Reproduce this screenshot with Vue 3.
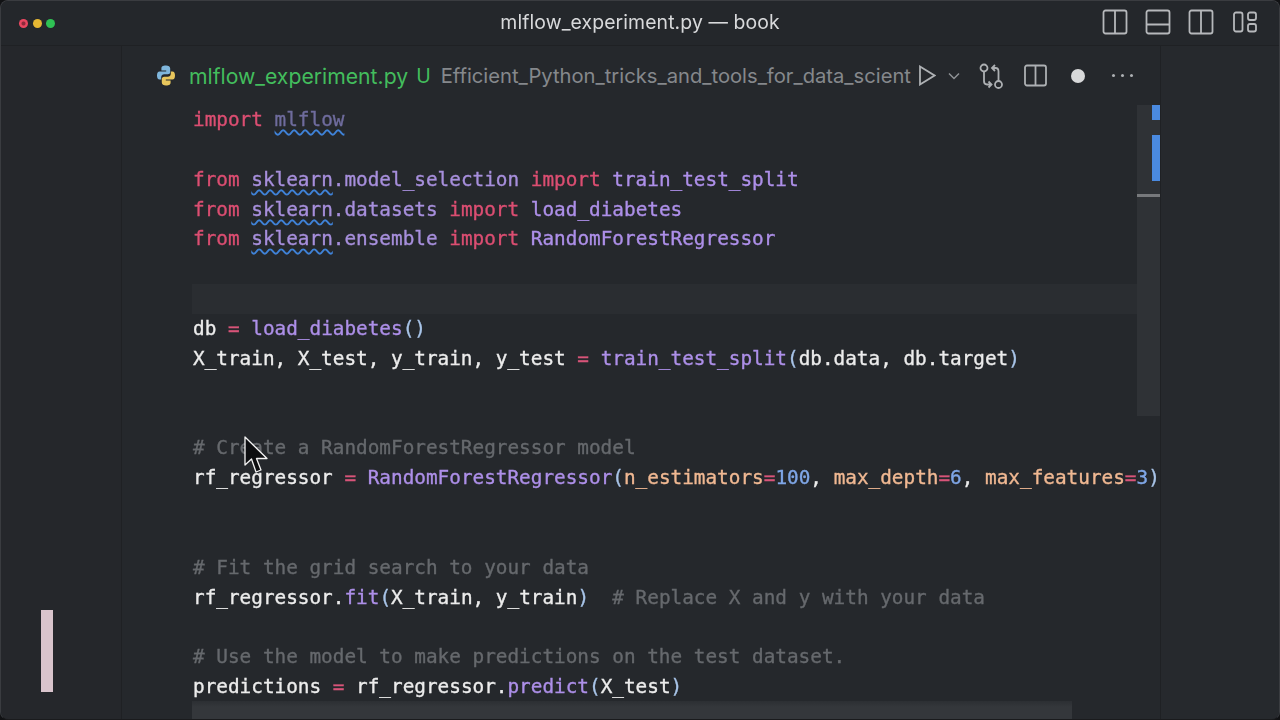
<script setup>
const k = 'kw', m = 'mod', d = 'mod-dim', w = 'wave', f = 'fn', t = 'txt', c = 'com', o = 'op', p = 'par', n = 'num', b = 'br'
const lines = [
  [['import', k], [' ', t], ['mlflow', d + ' ' + w]],
  [],
  [['from', k], [' ', t], ['sklearn', m + ' ' + w], ['.model_selection', m], [' ', t], ['import', k], [' ', t], ['train_test_split', f]],
  [['from', k], [' ', t], ['sklearn', m + ' ' + w], ['.datasets', m], [' ', t], ['import', k], [' ', t], ['load_diabetes', f]],
  [['from', k], [' ', t], ['sklearn', m + ' ' + w], ['.ensemble', m], [' ', t], ['import', k], [' ', t], ['RandomForestRegressor', f]],
  [],
  [],
  [['db ', t], ['=', o], [' ', t], ['load_diabetes', f], ['()', b]],
  [['X_train, X_test, y_train, y_test ', t], ['=', o], [' ', t], ['train_test_split', f], ['(', b], ['db.data, db.target', t], [')', b]],
  [],
  [],
  [['# Create a RandomForestRegressor model', c]],
  [['rf_regressor ', t], ['=', o], [' ', t], ['RandomForestRegressor', f], ['(', b], ['n_estimators', p], ['=', o], ['100', n], [', ', t], ['max_depth', p], ['=', o], ['6', n], [', ', t], ['max_features', p], ['=', o], ['3', n], [')', b]],
  [],
  [],
  [['# Fit the grid search to your data', c]],
  [['rf_regressor', t], ['.', t], ['fit', f], ['(', b], ['X_train, y_train', t], [')', b], ['  ', t], ['# Replace X and y with your data', c]],
  [],
  [['# Use the model to make predictions on the test dataset.', c]],
  [['predictions ', t], ['=', o], [' rf_regressor.', t], ['predict', f], ['(', b], ['X_test', t], [')', b]],
  [],
]
</script>

<template>
  <div class="window">
    <header class="titlebar">
      <div class="lights">
        <span class="light red"></span>
        <span class="light yellow"></span>
        <span class="light green"></span>
      </div>
      <div class="title">mlflow_experiment.py — book</div>
      <div class="layout-icons">
        <svg width="26" height="26" viewBox="0 0 26 26"><rect x="1.5" y="1.5" width="23" height="23" rx="2"/><path d="M13 1.500v23"/></svg>
        <svg width="26" height="26" viewBox="0 0 26 26"><rect x="1.5" y="1.5" width="23" height="23" rx="2"/><path d="M1.5 15.500h23"/></svg>
        <svg width="26" height="26" viewBox="0 0 26 26"><rect x="1.500" y="1.5" width="23" height="23" rx="2"/><path d="M13 1.500v23"/></svg>
        <svg class="last" width="26" height="26" viewBox="0 0 26 26"><rect x="2" y="3.500" width="8.500" height="19" rx="2"/><rect x="16" y="3.500" width="8" height="7.500" rx="2"/><rect x="16" y="15" width="8" height="7.500" rx="2"/></svg>
      </div>
    </header>

    <div class="body">
      <aside class="sidebar"><div class="sidebar-bar"></div></aside>

      <main class="main">
        <div class="tabbar">
          <svg class="py" width="18" height="21" viewBox="0 0 18 21">
            <path fill="#7fb6dc" d="M9 0.500c-3.500 0-4.600 1.200-4.600 3v2h4.800v1H2.600C0.900 6.500 0 8 0 10.500s0.900 4 2.600 4h1.600v-2.300c0-1.700 1.300-3 3-3h3.700c1.300 0 2.300-1 2.300-2.300V3.500c0-2-1.700-3-4.200-3z"/>
            <path fill="#e8c65c" d="M9 20.500c3.500 0 4.600-1.200 4.600-3v-2H8.800v-1h6.600c1.700 0 2.600-1.500 2.600-4s-.9-4-2.600-4h-1.600v2.300c0 1.700-1.300 3-3 3H7.100c-1.300 0-2.300 1-2.300 2.300v3.400c0 2 1.700 3 4.200 3z"/>
          </svg>
          <span class="tab-name">mlflow_experiment.py</span>
          <span class="tab-u">U</span>
          <span class="tab-path">Efficient_Python_tricks_and_tools_for_data_scient</span>
          <div class="tab-actions">
            <svg class="a-play" width="18" height="21" viewBox="0 0 18 21"><path d="M2 1.500 16.500 10.500 2 19.500z"/></svg>
            <svg class="a-chev" width="14" height="8" viewBox="0 0 14 8"><path d="M2 1.500l5 5 5-5"/></svg>
            <svg class="a-diff" width="24" height="26" viewBox="0 0 24 26">
              <circle cx="5" cy="5" r="3.500"/><circle cx="19.500" cy="21.500" r="3.500"/>
              <path d="M5 8.500v9.500c0 2 1.200 3.500 3 3.500h4M9.500 18.500l3 3-3 3M19.500 18V8.500c0-2-1.200-3.500-3-3.500h-4M16 2l-3 3 3 3"/>
            </svg>
            <svg class="a-split" width="23" height="23" viewBox="0 0 23 23"><rect x="1" y="1.500" width="21" height="20" rx="2"/><path d="M11.500 1.500v20"/></svg>
            <span class="a-dot"></span>
            <span class="a-more"><i></i><i></i><i></i></span>
          </div>
        </div>

        <div class="editor">
          <div class="current-line"></div>
          <div class="bottom-line"></div>
          <div class="code">
            <div v-for="(line, i) in lines" :key="i" class="line"><span v-for="(tok, j) in line" :key="j" :class="tok[1]">{{ tok[0] }}</span></div>
          </div>
          <div class="scroll-track"></div>
          <div class="scroll-mark one"></div>
          <div class="scroll-mark two"></div>
          <div class="scroll-rule"></div>
        </div>
      </main>

      <aside class="rightbar"></aside>
    </div>

    <svg class="cursor" width="26" height="40" viewBox="0 0 26 40">
      <path d="M2 2V30l6.500-6 4.500 13 5-2-4.500-11.500H24z" fill="#0d0e10" stroke="#f4f4f4" stroke-width="1.300" stroke-linejoin="round"/>
    </svg>
  </div>
</template>

<style>
html, body { margin: 0; background: #111214; overflow: hidden; }
</style>

<style scoped>
.window {
  position: relative;
  width: 1280px;
  height: 720px;
  box-sizing: border-box;
  overflow: hidden;
  display: flex;
  flex-direction: column;
  background: #25282c;
  border: 1px solid #3a3c40;
  border-bottom-color: #1a1b1d;
  border-radius: 8px;
  filter: blur(0.45px);
  font-family: Inter, "Liberation Sans", sans-serif;
}
.titlebar {
  position: relative;
  flex: 0 0 45px;
  box-sizing: border-box;
  padding-bottom: 3px;
  display: flex;
  align-items: center;
  justify-content: space-between;
  background: #24272b;
  border-bottom: 1px solid #1f2124;
}
.lights { display: flex; gap: 4.500px; padding-left: 18px; margin-top: 4px; }
.light { width: 9px; height: 9px; border-radius: 50%; }
.red { background: radial-gradient(circle, #8e2a3c 0 1.500px, #ea4760 2.500px); }
.yellow { background: #e5b733; }
.green { background: #2fc254; }
.title {
  position: absolute;
  left: 0;
  right: 0;
  text-align: center;
  color: #d8d9db;
  font-size: 19.400px;
  letter-spacing: 0.1px;
}
.layout-icons { display: flex; gap: 17px; padding-right: 21px; }
.layout-icons svg { fill: none; stroke: #b6b8bb; stroke-width: 1.800; }
.layout-icons .last { margin-left: 1px; }

.body { flex: 1; display: flex; min-height: 0; }
.sidebar {
  flex: 0 0 121px;
  display: flex;
  flex-direction: column;
  justify-content: flex-end;
  padding: 0 0 27px 40px;
  box-sizing: border-box;
  border-right: 1px solid #1f2124;
  background: #25272b;
}
.sidebar-bar { width: 12px; height: 82px; background: #d9c4cc; }
.main { flex: 0 0 1037.500px; min-width: 0; display: flex; flex-direction: column; }
.rightbar { flex: 1; border-left: 1px solid #1f2124; background: #26292d; }

.tabbar {
  flex: 0 0 59px;
  display: flex;
  align-items: center;
  box-sizing: border-box;
  padding: 0 0 0 35px;
  background: #25282c;
}
.py { flex: none; margin-right: 14px; }
.tab-name { color: #43bd5d; font-size: 21.200px; white-space: nowrap; }
.tab-u { color: #43bd5d; font-size: 19.500px; margin-left: 8px; }
.tab-path {
  flex: none;
  color: #85888c;
  font-size: 20.200px;
  margin-left: 10px;
  width: 470px;
  white-space: nowrap;
  overflow: hidden;
}
.tab-actions { display: flex; align-items: center; margin-left: 7px; }
.tab-actions svg { flex: none; fill: none; stroke: #adb0b3; stroke-width: 1.800; }
.tab-actions .a-chev { margin-left: 11px; stroke: #8f9296; stroke-width: 1.500; }
.a-diff { margin-left: 18px; }
.a-split { margin-left: 21px; }
.a-dot { width: 14px; height: 14px; border-radius: 50%; background: #d8d9da; margin-left: 24px; }
.a-more { display: flex; gap: 6px; margin-left: 27px; }
.a-more i { width: 3px; height: 3px; border-radius: 50%; background: #adb0b3; }

.editor { position: relative; flex: 1; min-height: 0; overflow: hidden; background: #25282c; }
.current-line { position: absolute; left: 70px; right: 22px; top: 179px; height: 30px; background: #2a2d31; }
.bottom-line { position: absolute; left: 70px; width: 880px; top: 596px; height: 24px; background: linear-gradient(#2c2f33, #34373b 6px); }
.code {
  position: relative;
  padding: 0 0 0 71px;
  font-family: "DejaVu Sans Mono", "Liberation Mono", monospace;
  font-size: 19.350px;
  line-height: 29.850px;
  white-space: pre;
  font-weight: 400;
  -webkit-text-stroke: 0.35px currentColor;
}
.line { height: 29.850px; }
.kw { color: #dc4e72; }
.mod { color: #a78fdc; }
.mod-dim { color: #6f6c9d; }
.wave { text-decoration: underline wavy #3f82d8 1.500px; text-underline-offset: 3px; }
.fn { color: #ad8fe8; }
.txt { color: #ececec; }
.com { color: #66696d; }
.op { color: #d8557a; }
.par { color: #f0b892; }
.num { color: #7fa6e6; }
.br { color: #a8c4e8; }

.scroll-track { position: absolute; right: 0; top: 0; width: 22.500px; height: 311px; background: #2f3236; }
.scroll-mark { position: absolute; right: 0; width: 7.500px; background: #4a8ae0; }
.one { top: 0; height: 15px; }
.two { top: 30px; height: 45.500px; }
.scroll-rule { position: absolute; right: 0; top: 89px; width: 22.500px; height: 3px; background: #77797c; }

.cursor { position: absolute; left: 242px; top: 434px; }
</style>
